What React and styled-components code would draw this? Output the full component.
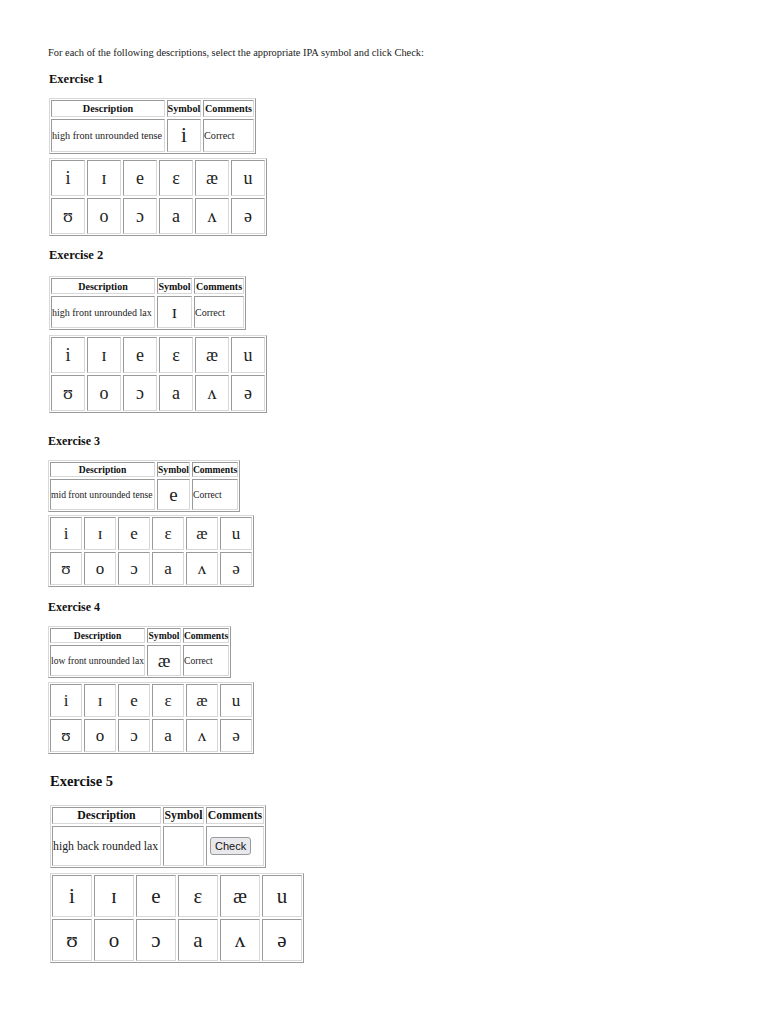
import styled, { createGlobalStyle } from "styled-components";

const GlobalStyle = createGlobalStyle`
  html, body {
    margin: 0;
    padding: 0;
    background: #fff;
  }
  body {
    font-family: "Liberation Serif", "Times New Roman", serif;
    color: #222;
  }
`;

const Page = styled.div`
  width: 768px;
  min-height: 1024px;
  padding: 47px 0 0 48px;
  box-sizing: border-box;
`;

const Instruction = styled.p`
  margin: 0;
  font-size: 10.4px;
  line-height: 12px;
  color: #222;
`;

const Section = styled.section`
  display: flex;
  flex-direction: column;
  align-items: flex-start;
  margin-left: ${p => p.$indent}px;
`;

const Heading = styled.h3`
  margin: ${p => p.$top}px 0 0;
  font-size: ${p => p.$size}px;
  line-height: ${p => p.$line}px;
  font-weight: bold;
  color: #111;
`;

const InfoTable = styled.div`
  display: grid;
  grid-template-columns: ${p => p.$cols.map(c => `${c}px`).join(" ")};
  grid-template-rows: ${p => p.$rows.map(r => `${r}px`).join(" ")};
  gap: 2px;
  padding: 1px;
  margin-top: ${p => p.$top}px;
  border: 1px solid;
  border-color: #d8d8d8 #9a9a9a #9a9a9a #d8d8d8;
  font-size: ${p => p.$text}px;
`;

const Cell = styled.div`
  box-sizing: border-box;
  border: 1px solid;
  border-color: #9a9a9a #d8d8d8 #d8d8d8 #9a9a9a;
  display: flex;
  align-items: center;
  justify-content: ${p => (p.$align === "left" ? "flex-start" : "center")};
  padding: 0;
  white-space: nowrap;
`;

const HeadCell = styled(Cell)`
  font-weight: bold;
  color: #111;
`;

const SymbolCell = styled(Cell)`
  font-size: ${p => p.$size}px;
  color: #222;
`;

const CheckButton = styled.button`
  font-family: "Liberation Sans", Arial, sans-serif;
  font-size: 11px;
  color: #111;
  background: #e9e9ed;
  border: 1px solid #9a9a9a;
  border-radius: 3px;
  padding: 2px 4px;
  margin-left: 3px;
`;

const ChoiceGrid = styled.div`
  display: grid;
  grid-template-columns: repeat(6, ${p => p.$cell}px);
  grid-auto-rows: ${p => p.$row}px;
  gap: 2px;
  padding: 1px;
  margin-top: ${p => p.$top}px;
  border: 1px solid;
  border-color: #d8d8d8 #9a9a9a #9a9a9a #d8d8d8;
`;

const Choice = styled(Cell)`
  font-size: ${p => p.$size}px;
  color: #222;
  cursor: pointer;
`;

const choices = ["i", "ɪ", "e", "ɛ", "æ", "u", "ʊ", "o", "ɔ", "a", "ʌ", "ə"];

const exercises = [
  { n: 1, desc: "high front unrounded tense", symbol: "i", comment: "Correct", indent: 1, headTop: 13, headSize: 12.5, headLine: 14, tableTop: 12, cols: [114, 34, 51], rows: [17, 33], text: 10.2, sym: 21, gap: 4, cell: 34, row: 36, grid: 18 },
  { n: 2, desc: "high front unrounded lax", symbol: "ɪ", comment: "Correct", indent: 1, headTop: 12, headSize: 12.5, headLine: 14, tableTop: 14, cols: [104, 35, 50], rows: [16, 32], text: 10, sym: 19, gap: 5, cell: 34, row: 36, grid: 18 },
  { n: 3, desc: "mid front unrounded tense", symbol: "e", comment: "Correct", indent: 0, headTop: 21, headSize: 12, headLine: 14, tableTop: 12, cols: [105, 33, 46], rows: [15, 31], text: 9.6, sym: 19, gap: 3, cell: 32, row: 33, grid: 17 },
  { n: 4, desc: "low front unrounded lax", symbol: "æ", comment: "Correct", indent: 0, headTop: 13, headSize: 12, headLine: 14, tableTop: 12, cols: [95, 34, 46], rows: [15, 31], text: 9.6, sym: 19, gap: 4, cell: 32, row: 33, grid: 17 },
  { n: 5, desc: "high back rounded lax", symbol: "", comment: null, indent: 2, headTop: 19, headSize: 14.5, headLine: 16, tableTop: 16, cols: [109, 41, 58], rows: [17, 40], text: 11.8, sym: 22, gap: 5, cell: 40, row: 42, grid: 21 },
];

function Exercise({ ex }) {
  return (
    <Section $indent={ex.indent}>
      <Heading $top={ex.headTop} $size={ex.headSize} $line={ex.headLine}>
        Exercise {ex.n}
      </Heading>
      <InfoTable $top={ex.tableTop} $cols={ex.cols} $rows={ex.rows} $text={ex.text}>
        <HeadCell>Description</HeadCell>
        <HeadCell>Symbol</HeadCell>
        <HeadCell>Comments</HeadCell>
        <Cell $align="left">{ex.desc}</Cell>
        <SymbolCell $size={ex.sym}>{ex.symbol}</SymbolCell>
        <Cell $align="left">
          {ex.comment ? ex.comment : <CheckButton>Check</CheckButton>}
        </Cell>
      </InfoTable>
      <ChoiceGrid $top={ex.gap} $cell={ex.cell} $row={ex.row}>
        {choices.map(c => (
          <Choice key={c} $size={ex.grid}>
            {c}
          </Choice>
        ))}
      </ChoiceGrid>
    </Section>
  );
}

export default function App() {
  return (
    <Page>
      <GlobalStyle />
      <Instruction>
        For each of the following descriptions, select the appropriate IPA symbol and click Check:
      </Instruction>
      {exercises.map(ex => (
        <Exercise key={ex.n} ex={ex} />
      ))}
    </Page>
  );
}
